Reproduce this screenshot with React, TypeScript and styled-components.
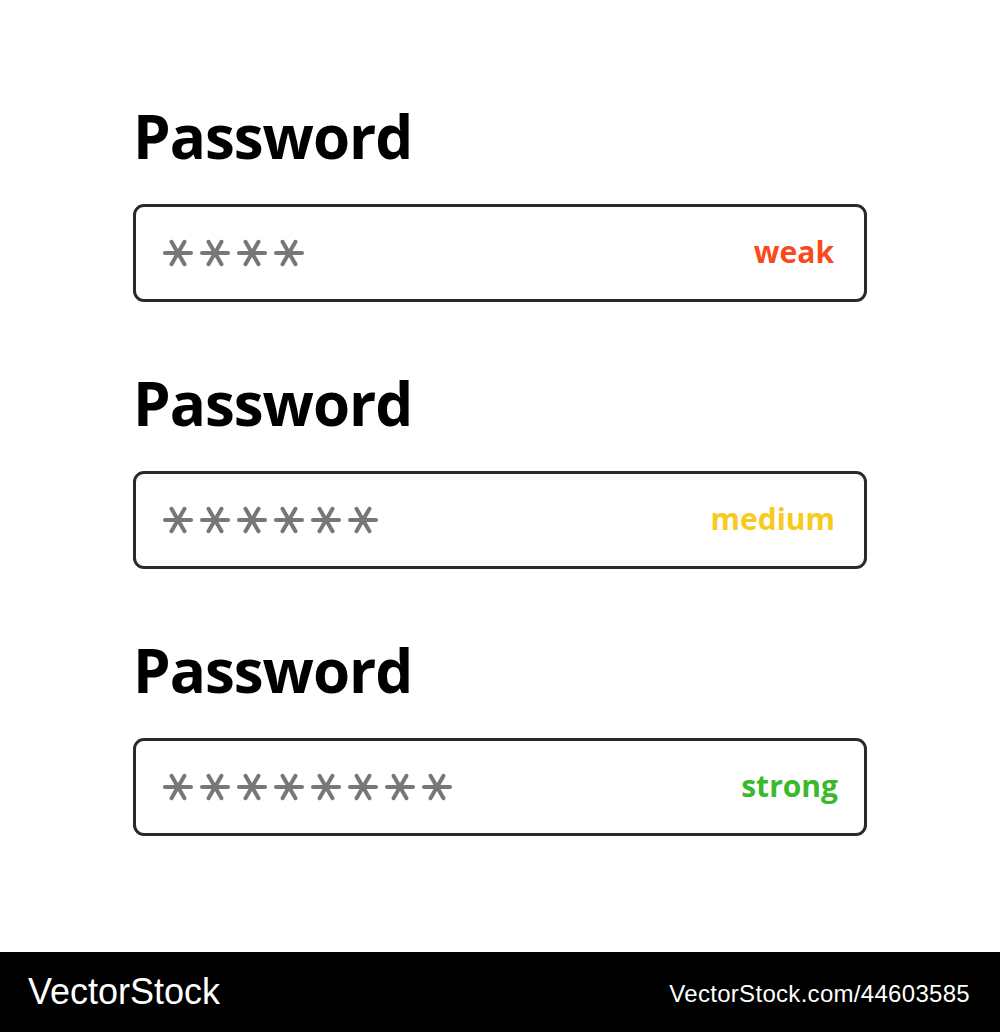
import React from "react";
import styled, { createGlobalStyle } from "styled-components";

const GlobalStyle = createGlobalStyle`
  html, body {
    margin: 0;
    padding: 0;
    background: #ffffff;
  }
  body {
    font-family: "Open Sans", "Noto Sans", sans-serif;
  }
`;

const Page = styled.div`
  min-height: 1032px;
  display: flex;
  flex-direction: column;
  background: #ffffff;
`;

const Main = styled.main`
  flex: 1;
  padding: 104px 0 0 133px;
  display: flex;
  flex-direction: column;
  gap: 69px;
`;

const Field = styled.section`
  display: flex;
  flex-direction: column;
  gap: 36px;
`;

const Label = styled.h2`
  margin: 0;
  font-family: "Open Sans", "Noto Sans", sans-serif;
  font-weight: 700;
  font-size: 60px;
  line-height: 64px;
  color: #000000;
  letter-spacing: -1px;
`;

const InputBox = styled.div`
  box-sizing: border-box;
  width: 734px;
  height: 98px;
  border: 3px solid #2a2a2a;
  border-radius: 11px;
  display: flex;
  align-items: center;
  justify-content: space-between;
  padding: 0 30px 0 27px;
`;

const Mask = styled.div`
  display: flex;
  gap: 7px;
  align-items: center;
`;

const Strength = styled.span<{ $color: string; $shift?: number }>`
  font-family: "Open Sans", "Noto Sans", sans-serif;
  font-weight: 700;
  font-size: 30px;
  line-height: 1;
  color: ${(p) => p.$color};
  margin-right: ${(p) => -(p.$shift ?? 0)}px;
  padding-bottom: 2px;
`;

const Footer = styled.footer`
  height: 80px;
  background: #000000;
  display: flex;
  align-items: center;
  justify-content: space-between;
  padding: 0 30px 0 28px;
  font-family: "Liberation Sans", Arial, sans-serif;
  color: #ffffff;
`;

const Brand = styled.span`
  font-size: 36px;
  letter-spacing: 0;
`;

const Ref = styled.span`
  font-size: 24px;
  letter-spacing: 0.3px;
  padding-top: 4px;
`;

const Star = () => (
  <svg width="30" height="30" viewBox="0 0 30 30" aria-hidden="true">
    <g stroke="#777777" strokeWidth="4" strokeLinecap="round">
      <line x1="2" y1="15" x2="28" y2="15" />
      <line x1="8.5" y1="3.74" x2="21.5" y2="26.26" />
      <line x1="21.5" y1="3.74" x2="8.5" y2="26.26" />
    </g>
  </svg>
);

type FieldData = {
  count: number;
  strength: string;
  color: string;
  shift?: number;
};

const fields: FieldData[] = [
  { count: 4, strength: "weak", color: "#f9491d" },
  { count: 6, strength: "medium", color: "#f7cb1d", shift: 1 },
  { count: 8, strength: "strong", color: "#3bb92d", shift: 4 },
];

export default function App() {
  return (
    <>
      <GlobalStyle />
      <Page>
        <Main>
          {fields.map((f) => (
            <Field key={f.strength}>
              <Label>Password</Label>
              <InputBox>
                <Mask>
                  {Array.from({ length: f.count }).map((_, i) => (
                    <Star key={i} />
                  ))}
                </Mask>
                <Strength $color={f.color} $shift={f.shift}>
                  {f.strength}
                </Strength>
              </InputBox>
            </Field>
          ))}
        </Main>
        <Footer>
          <Brand>VectorStock</Brand>
          <Ref>VectorStock.com/44603585</Ref>
        </Footer>
      </Page>
    </>
  );
}
